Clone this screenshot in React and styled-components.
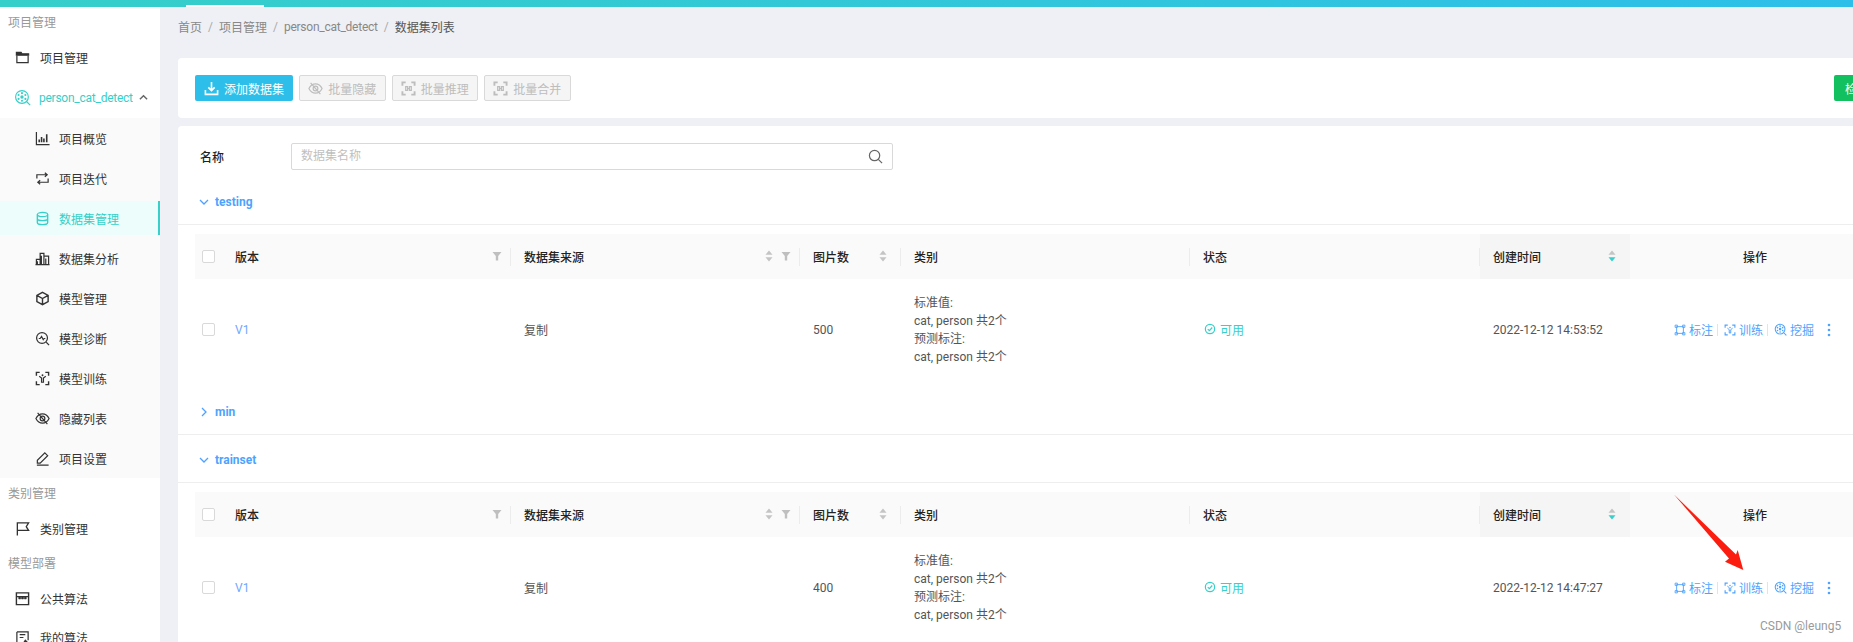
import styled, { createGlobalStyle } from "styled-components";

const GlobalStyle = createGlobalStyle`
  html, body { margin: 0; height: 100%; overflow: hidden; background: #fff; }
  body { font-family: Roboto, "Noto Sans CJK SC", sans-serif; font-size: 12px; color: #555; }
  * { box-sizing: border-box; }
`;

// 16x16 stroke drawings
const icons = {
  folder: <><path d="M1.500 2.500h5l1 1.500h7v1.500h-13z" fill="currentColor" /><path d="M2 6v7.500h12V6" /></>,
  chart: <><path d="M1.500 1v13.500H15.500" /><path d="M4.500 12V9M7 12V6.500M9.500 12V8M12.500 12V3.500" strokeWidth="1.700" /></>,
  loop: <path d="M2 8V4h11M10.500 1.800l2.500 2.200-2.500 2.200M14 8v4H3M5.500 9.800L3 12l2.500 2.200" />,
  db: <><ellipse cx="8" cy="3.800" rx="5.500" ry="2.300" /><path d="M2.500 3.800v8.400c0 1.300 2.500 2.300 5.500 2.300s5.500-1 5.500-2.300V3.800M2.500 8c0 1.300 2.500 2.300 5.500 2.300s5.500-1 5.500-2.300" strokeWidth="1.500" /></>,
  bars: <path d="M1.500 14.500V9h4v5.500zM5.500 14.500V2.500h4v12zM9.500 14.500V5.500h5v9zM0.500 14.500h15M2.500 11v3M6.800 5v9M11.500 8v6" />,
  box: <path d="M8 1.500l6 3.200v6.600l-6 3.200-6-3.200V4.700zM2 4.700l6 3.300 6-3.300M8 8v6.500" strokeWidth="1.500" />,
  diag: <><circle cx="7.500" cy="7.500" r="5.800" /><path d="M12 12l3 3M4 8h1.500l1.500-2.200 1.800 3.500 1-1.300H11" /></>,
  train: <><path d="M1.500 5V1.500H5M11 1.500h3.500V5M14.500 11v3.500H11M5 14.500H1.500V11" strokeWidth="1.500" /><path d="M4.500 5.500L7 7.500v4.500h2V7.500l2.500-2" /><circle cx="8" cy="4.500" r="1" fill="currentColor" stroke="none" /></>,
  hide: <><path d="M1 8s2.500-5 7-5 7 5 7 5-2.500 5-7 5-7-5-7-5z" /><circle cx="8" cy="8" r="2.500" /><path d="M2.800 2l10.400 12" /></>,
  pen: <path d="M10.500 2l3 3-8 8H2.500v-3zM2 15h12.500" />,
  flag: <path d="M2.500 15.500V2h12l-2.500 4 2.500 4h-12" strokeWidth="1.400" />,
  store: <><path d="M1.500 2h13v12.500h-13zM1.500 6h13" strokeWidth="1.500" /><path d="M4 6v2.500h2V6M7 6v2.500h2V6M10 6v2.500h2V6" fill="currentColor" strokeWidth=".6" /></>,
  mine: <path d="M2 2h12v9M2 2v12h8M5 5h6M5 8h4M9 14l2-3 3 3" />,
  upload: <path d="M8 1v9M4.600 6.800L8 10.200l3.400-3.400M1.500 9.500v4.800h13V9.500" strokeWidth="1.700" />,
  merge: <><path d="M1.500 5V1.500H5M11 1.500h3.500V5M14.500 11v3.500H11M5 14.500H1.500V11" strokeWidth="2" /><path d="M5 6h2v4H5zM9 6h2v4H9zM7 8h2" strokeWidth="1.300" /></>,
  mark: <><path d="M3.500 3.500h9M3.500 12.500h9M3.500 3.500v9M12.500 3.500v9" strokeWidth="1.200" /><path d="M1.500 1.500h3v3h-3zM11.500 1.500h3v3h-3zM1.500 11.500h3v3h-3zM11.500 11.500h3v3h-3z" strokeWidth="1.200" /></>,
  wheel: <>
    <circle cx="7.500" cy="7.500" r="6" />
    <circle cx="7.500" cy="7.500" r="1.600" fill="currentColor" stroke="none" />
    <circle cx="7.500" cy="3.900" r="1" fill="currentColor" stroke="none" />
    <circle cx="7.500" cy="11.100" r="1" fill="currentColor" stroke="none" />
    <circle cx="4.300" cy="5.700" r="1" fill="currentColor" stroke="none" />
    <circle cx="10.700" cy="5.700" r="1" fill="currentColor" stroke="none" />
    <circle cx="4.300" cy="9.300" r="1" fill="currentColor" stroke="none" />
    <circle cx="10.700" cy="9.300" r="1" fill="currentColor" stroke="none" />
    <path d="M12 12l3.200 3.200" />
  </>,
  check: <><circle cx="8" cy="8" r="6.200" strokeWidth="1.600" /><path d="M5 8.200l2.200 2 3.800-4.200" strokeWidth="1.600" /></>,
  search: <><circle cx="7" cy="7" r="5.500" /><path d="M11 11l4 4" /></>,
};

function Icon({ name, size = 15, width = 1.3 }) {
  return (
    <svg width={size} height={size} viewBox="0 0 16 16" fill="none" stroke="currentColor" strokeWidth={width} style={{ flexShrink: 0 }}>
      {icons[name]}
    </svg>
  );
}

const subMenu = [
  ["chart", "项目概览"],
  ["loop", "项目迭代"],
  ["db", "数据集管理", true],
  ["bars", "数据集分析"],
  ["box", "模型管理"],
  ["diag", "模型诊断"],
  ["train", "模型训练"],
  ["hide", "隐藏列表"],
  ["pen", "项目设置"],
];

function Section({ title, open = true, total, date }) {
  return (
    <>
      <SectionHead>
        <Caret>
          <svg width="10" height="10" viewBox="0 0 10 10" fill="none" stroke="currentColor" strokeWidth="1.300">
            {open ? <path d="M1 3l4 4 4-4" /> : <path d="M3 1l4 4-4 4" />}
          </svg>
        </Caret>
        {title}
      </SectionHead>
      {open && <DataTable total={total} date={date} />}
    </>
  );
}

function Sort({ active }) {
  return (
    <SortBox>
      <svg width="8" height="12" viewBox="0 0 8 12">
        <path d="M4 0.500L7.500 4.800H0.500z" fill="#c4c4c4" />
        <path d="M4 11.500L7.500 7.200H0.500z" fill={active ? "#36cfc9" : "#c4c4c4"} />
      </svg>
    </SortBox>
  );
}

function Filter() {
  return (
    <svg width="10" height="10" viewBox="0 0 10 10">
      <path d="M0.500 1h9L6.200 5v4.500H3.800V5z" fill="#bfbfbf" />
    </svg>
  );
}

function DataTable({ total, date }) {
  return (
    <TableWrap>
      <Table>
        <colgroup>
          <col width="27" />
          <col width="289" />
          <col width="289" />
          <col width="101" />
          <col width="289" />
          <col width="290" />
          <col width="150" />
          <col width="250" />
        </colgroup>
        <thead>
          <tr>
            <Th><Check /></Th>
            <Th $line><HeadCell>版本<Tools><Filter /></Tools></HeadCell></Th>
            <Th $line><HeadCell>数据集来源<Tools><Sort /><Filter /></Tools></HeadCell></Th>
            <Th $line><HeadCell>图片数<Tools $sort><Sort /></Tools></HeadCell></Th>
            <Th $line><HeadCell>类别</HeadCell></Th>
            <Th $line><HeadCell>状态</HeadCell></Th>
            <Th $sorted><HeadCell>创建时间<Tools $sort><Sort active /></Tools></HeadCell></Th>
            <Th $center>操作</Th>
          </tr>
        </thead>
        <tbody>
          <tr>
            <Td><Check /></Td>
            <Td><VersionLink>V1</VersionLink></Td>
            <Td>复制</Td>
            <Td>{total}</Td>
            <Td>
              <Lines>
                <div>标准值:</div>
                <div>cat, person 共2个</div>
                <div>预测标注:</div>
                <div>cat, person 共2个</div>
              </Lines>
            </Td>
            <Td><Status><Icon name="check" size={12} />可用</Status></Td>
            <Td>{date}</Td>
            <Td>
              <Ops>
                <Op><Icon name="mark" size={12} />标注</Op>
                <OpLine />
                <Op><Icon name="train" size={12} />训练</Op>
                <OpLine />
                <Op><Icon name="wheel" size={13} />挖掘</Op>
                <Dots>
                  <svg width="4" height="14" viewBox="0 0 4 14"><circle cx="2" cy="2" r="1.300" fill="#4da3ff" /><circle cx="2" cy="7" r="1.300" fill="#4da3ff" /><circle cx="2" cy="12" r="1.300" fill="#4da3ff" /></svg>
                </Dots>
              </Ops>
            </Td>
          </tr>
        </tbody>
      </Table>
    </TableWrap>
  );
}

export default function App() {
  return (
    <Page>
      <GlobalStyle />
      <TopBar />
      <Body>
        <Sidebar>
          <GroupTitle $first>项目管理</GroupTitle>
          <MenuItem><Icon name="folder" />项目管理</MenuItem>
          <ProjectItem>
            <Icon name="wheel" size={17} width={1.1} />
            <ProjectName>person_cat_detect</ProjectName>
            <svg width="9" height="9" viewBox="0 0 10 10" fill="none" stroke="#666" strokeWidth="1.600"><path d="M1 7l4-4 4 4" /></svg>
          </ProjectItem>
          <SubMenu>
            {subMenu.map(([icon, label, active]) => (
              <SubRow key={label}>
                <SubItem $active={active}><Icon name={icon} />{label}</SubItem>
              </SubRow>
            ))}
          </SubMenu>
          <GroupTitle>类别管理</GroupTitle>
          <MenuItem><Icon name="flag" />类别管理</MenuItem>
          <GroupTitle $gap>模型部署</GroupTitle>
          <MenuItem><Icon name="store" />公共算法</MenuItem>
          <MenuItem><Icon name="mine" />我的算法</MenuItem>
        </Sidebar>
        <Main>
          <Breadcrumb>
            <span>首页</span><Slash>/</Slash>
            <span>项目管理</span><Slash>/</Slash>
            <ProjectName>person_cat_detect</ProjectName><Slash>/</Slash>
            <Current>数据集列表</Current>
          </Breadcrumb>
          <ToolbarCard>
            <PrimaryButton><Icon name="upload" />添加数据集</PrimaryButton>
            <GhostButton><Icon name="hide" />批量隐藏</GhostButton>
            <GhostButton><Icon name="merge" />批量推理</GhostButton>
            <GhostButton><Icon name="merge" />批量合并</GhostButton>
            <GreenButton>检测</GreenButton>
          </ToolbarCard>
          <ListCard>
            <FilterRow>
              <FilterLabel>名称</FilterLabel>
              <SearchBox>
                数据集名称
                <SearchIcon><Icon name="search" /></SearchIcon>
              </SearchBox>
            </FilterRow>
            <Section title="testing" total={500} date="2022-12-12 14:53:52" />
            <RowGap />
            <Section title="min" open={false} />
            <Section title="trainset" total={400} date="2022-12-12 14:47:27" />
          </ListCard>
        </Main>
      </Body>
      <Arrow viewBox="0 0 80 80" width="80" height="80">
        <path d="M0 0.500 L62 60.500 L63.700 56 L69.300 76 L51 67.700 L55 64.500 Z" fill="#fb1d10" />
      </Arrow>
      <Watermark>CSDN @leung5</Watermark>
    </Page>
  );
}

const Page = styled.div`
  position: relative;
  width: 1853px;
  height: 642px;
  overflow: hidden;
  display: flex;
  flex-direction: column;
`;
const TopBar = styled.div`
  position: relative;
  height: 7px;
  flex-shrink: 0;
  background: linear-gradient(90deg, #36cfc9, #2dbfe9);
  &::after {
    content: "";
    position: absolute;
    left: 186px;
    bottom: 0;
    width: 78px;
    height: 2px;
    background: #fff;
  }
`;
const Body = styled.div`
  display: flex;
  flex: 1;
  min-height: 0;
`;
const Sidebar = styled.aside`
  width: 160px;
  flex-shrink: 0;
  background: #fff;
  overflow: hidden;
  color: #333;
`;
const GroupTitle = styled.div`
  height: 30px;
  line-height: 30px;
  padding-left: 8px;
  color: #999;
  margin-top: ${(p) => (p.$gap ? "1px" : p.$first ? "1px" : "1px")};
`;
const MenuItem = styled.div`
  display: flex;
  align-items: center;
  gap: 10px;
  height: 39px;
  padding-left: 15px;
`;
const ProjectItem = styled(MenuItem)`
  height: 41px;
  color: #36cfc9;
  gap: 8px;
  padding-left: 14px;
  svg:last-child { margin-left: -2px; }
`;
const ProjectName = styled.span`
  letter-spacing: -0.25px;
`;
const SubMenu = styled.div`
  background: #fafafa;
`;
const SubRow = styled.div`
  height: 40px;
  display: flex;
  align-items: center;
`;
const SubItem = styled.div`
  display: flex;
  align-items: center;
  gap: 9px;
  width: 100%;
  height: 34px;
  padding-left: 35px;
  color: ${(p) => (p.$active ? "#36cfc9" : "#333")};
  background: ${(p) => (p.$active ? "#edfdfb" : "transparent")};
  border-right: ${(p) => (p.$active ? "2px solid #36cfc9" : "none")};
`;
const Main = styled.main`
  flex: 1;
  min-width: 0;
  background: #eff0f5;
  padding-left: 18px;
  overflow: hidden;
`;
const Breadcrumb = styled.div`
  display: flex;
  align-items: center;
  height: 51px;
  padding-bottom: 12px;
  color: #888;
`;
const Slash = styled.span`
  margin: 0 6px;
  color: #aaa;
`;
const Current = styled.span`
  color: #555;
`;
const ToolbarCard = styled.div`
  display: flex;
  align-items: flex-start;
  gap: 6px;
  width: 1720px;
  height: 60px;
  padding: 17px 18px 0 17px;
  background: #fff;
  border-radius: 4px;
  margin-bottom: 8px;
`;
const PrimaryButton = styled.div`
  display: flex;
  align-items: center;
  justify-content: center;
  gap: 5px;
  width: 98px;
  height: 26px;
  background: #2dbfe9;
  color: #fff;
  border-radius: 2px;
`;
const GhostButton = styled(PrimaryButton)`
  width: 86.500px;
  background: #f5f5f5;
  color: #bdbdbd;
  border: 1px solid #d9d9d9;
`;
const GreenButton = styled(PrimaryButton)`
  width: 46px;
  margin-left: auto;
  background: #13c060;
`;
const ListCard = styled.div`
  width: 1720px;
  background: #fff;
  border-radius: 4px 4px 0 0;
  padding: 17px 0 40px;
`;
const FilterRow = styled.div`
  display: flex;
  align-items: center;
  height: 27px;
  padding-left: 22px;
  margin-bottom: 7px;
`;
const FilterLabel = styled.label`
  width: 91px;
  color: #222;
  font-weight: 500;
`;
const SearchBox = styled.div`
  position: relative;
  width: 602px;
  height: 27px;
  line-height: 25px;
  padding-left: 9px;
  border: 1px solid #d9d9d9;
  border-radius: 2px;
  color: #bfbfbf;
`;
const SearchIcon = styled.span`
  position: absolute;
  right: 9px;
  top: 5px;
  display: flex;
  color: #666;
`;
const SectionHead = styled.div`
  display: flex;
  align-items: center;
  gap: 6px;
  height: 48px;
  padding: 2px 0 0 21px;
  border-bottom: 1px solid #eeeeee;
  color: #4da3ff;
  font-weight: 700;
`;
const Caret = styled.span`
  display: flex;
  color: #4da3ff;
`;
const TableWrap = styled.div`
  padding: 9px 18px 0 17px;
`;
const RowGap = styled.div`
  height: 7px;
`;
const Table = styled.table`
  width: 1685px;
  table-layout: fixed;
  border-collapse: collapse;
`;
const Th = styled.th`
  position: relative;
  height: 45px;
  padding: 0 0 1px ${(p) => (p.$line || p.$sorted ? "13px" : "0")};
  text-align: ${(p) => (p.$center ? "center" : "left")};
  color: #222;
  font-weight: 500;
  background: ${(p) => (p.$sorted ? "#f5f5f5" : "#fafafa")};
  &:not(:first-child):not(:nth-child(7)):not(:last-child)::after {
    content: "";
    position: absolute;
    right: 0;
    top: 14px;
    width: 1px;
    height: 18px;
    background: #ececec;
  }
`;
const HeadCell = styled.div`
  display: flex;
  align-items: center;
  justify-content: space-between;
`;
const Tools = styled.span`
  display: flex;
  align-items: center;
  gap: 8px;
  padding-right: ${(p) => (p.$sort ? "14px" : "9px")};
`;
const SortBox = styled.span`
  display: flex;
`;
const Td = styled.td`
  height: 101px;
  padding: 0 0 0 13px;
  color: #555;
  &:first-child { padding: 0; }
`;
const Check = styled.span`
  display: block;
  width: 13px;
  height: 13px;
  margin-left: 7px;
  border: 1px solid #d9d9d9;
  border-radius: 2px;
  background: #fff;
`;
const VersionLink = styled.a`
  color: #6fa8ff;
`;
const Lines = styled.div`
  line-height: 18px;
`;
const Status = styled.span`
  display: inline-flex;
  align-items: center;
  gap: 4px;
  margin-left: 1px;
  color: #36cfc9;
`;
const Ops = styled.div`
  display: flex;
  align-items: center;
  padding-left: 31px;
  color: #4da3ff;
`;
const Op = styled.span`
  display: inline-flex;
  align-items: center;
  gap: 3px;
`;
const OpLine = styled.span`
  width: 1px;
  height: 12px;
  margin: 0 6px 0 4px;
  background: #e4e4e4;
`;
const Dots = styled.span`
  display: flex;
  margin-left: 13px;
`;
const Arrow = styled.svg`
  position: absolute;
  left: 1674px;
  top: 494px;
`;
const Watermark = styled.div`
  position: absolute;
  left: 1760px;
  top: 619px;
  color: #9a9a9a;
  font-size: 12px;
`;
